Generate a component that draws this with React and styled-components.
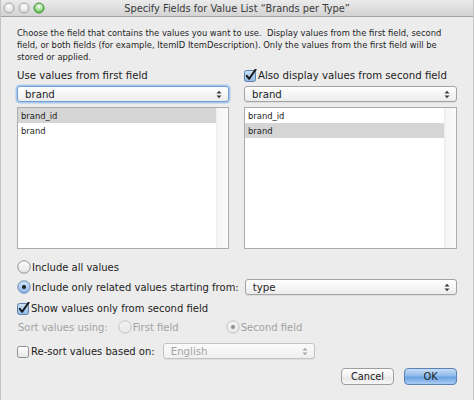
import React from "react";
import styled, { createGlobalStyle } from "styled-components";

const GlobalStyle = createGlobalStyle`
  html, body {
    margin: 0;
    padding: 0;
    background: #ececec;
  }
  body {
    font-family: "DejaVu Sans", "Liberation Sans", sans-serif;
    color: #1c1c1c;
  }
`;

function TrafficLight({ color, ring }) {
  return (
    <svg width="12" height="12" viewBox="0 0 12 12">
      <defs>
        <radialGradient id={"tl" + color} cx="50%" cy="35%" r="60%">
          <stop offset="0%" stopColor="#ffffff" />
          <stop offset="100%" stopColor={color} />
        </radialGradient>
      </defs>
      <circle cx="6" cy="6" r="5" fill={`url(#tl${color})`} stroke={ring} strokeWidth="1" />
    </svg>
  );
}

function Arrows({ dim }) {
  const c = dim ? "#a8a8a8" : "#3a3a3a";
  return (
    <svg width="6" height="9" viewBox="0 0 6 9">
      <path d="M0.5 3.5 L3 0.8 L5.5 3.5 Z" fill={c} />
      <path d="M0.5 5.5 L3 8.2 L5.5 5.5 Z" fill={c} />
    </svg>
  );
}

function CheckBox({ checked }) {
  const id = "cb" + (checked ? 1 : 0);
  return (
    <svg width="13" height="13" viewBox="0 0 13 13">
      <defs>
        <linearGradient id={id} x1="0" y1="0" x2="0" y2="1">
          <stop offset="0%" stopColor={checked ? "#cfe3f8" : "#ffffff"} />
          <stop offset="100%" stopColor={checked ? "#8fb9e6" : "#e6e6e6"} />
        </linearGradient>
      </defs>
      <rect x="0.5" y="1.5" width="11" height="11" rx="2" fill={`url(#${id})`} stroke={checked ? "#5f7fa8" : "#8e8e8e"} />
      {checked && (
        <path d="M2.8 6.8 L5.2 9.8 L11.6 0.6" fill="none" stroke="#1a1a1a" strokeWidth="2" strokeLinecap="round" strokeLinejoin="round" />
      )}
    </svg>
  );
}

function Radio({ on, dim }) {
  const id = "rd" + (on ? 1 : 0) + (dim ? 1 : 0);
  return (
    <svg width="14" height="14" viewBox="0 0 14 14" style={{ opacity: dim ? 0.45 : 1 }}>
      <defs>
        <linearGradient id={id} x1="0" y1="0" x2="0" y2="1">
          <stop offset="0%" stopColor={on && !dim ? "#d3e6fa" : "#ffffff"} />
          <stop offset="100%" stopColor={on && !dim ? "#8ab6e6" : "#e2e2e2"} />
        </linearGradient>
      </defs>
      <circle cx="7" cy="7" r="6.2" fill={`url(#${id})`} stroke={on && !dim ? "#5b7ea8" : "#8a8a8a"} strokeWidth="0.9" />
      {on && <circle cx="7" cy="7" r="2" fill="#1c1c1c" />}
    </svg>
  );
}

export default function App() {
  return (
    <>
      <GlobalStyle />
      <Window>
        <TitleBar>
          <Lights>
            <TrafficLight color="#d9d9d9" ring="#a5a5a5" />
            <TrafficLight color="#d9d9d9" ring="#a5a5a5" />
            <TrafficLight color="#5ec24a" ring="#3f8f33" />
          </Lights>
          <Title>Specify Fields for Value List “Brands per Type”</Title>
          <span />
        </TitleBar>

        <Content>
          <Description>
            Choose the field that contains the values you want to use.&nbsp; Display values from the first field, second
            field, or both fields (for example, ItemID ItemDescription). Only the values from the first field will be
            stored or applied.
          </Description>

          <Columns>
            <Column>
              <ColumnHeader>Use values from first field</ColumnHeader>
              <PopUp focused>
                <span>brand</span>
                <Arrows />
              </PopUp>
              <ListBox>
                <Rows>
                  <Row selected>brand_id</Row>
                  <Row>brand</Row>
                </Rows>
                <ScrollStrip />
              </ListBox>
            </Column>
            <Column>
              <ColumnHeader>
                <CheckBox checked />
                <span>Also display values from second field</span>
              </ColumnHeader>
              <PopUp>
                <span>brand</span>
                <Arrows />
              </PopUp>
              <ListBox>
                <Rows>
                  <Row>brand_id</Row>
                  <Row selected>brand</Row>
                </Rows>
                <ScrollStrip />
              </ListBox>
            </Column>
          </Columns>

          <Options>
            <OptionRow $top={10}>
              <Radio />
              <Label>Include all values</Label>
            </OptionRow>
            <OptionRow $top={4}>
              <Radio on />
              <Label>Include only related values starting from:</Label>
              <PopUp $grow>
                <span>type</span>
                <Arrows />
              </PopUp>
            </OptionRow>
            <OptionRow $top={5}>
              <CheckBox checked />
              <Label>Show values only from second field</Label>
            </OptionRow>
            <OptionRow $top={3}>
              <Label $dim>Sort values using:</Label>
              <Choice $width={98}>
                <Radio dim />
                <Label $dim>First field</Label>
              </Choice>
              <Choice>
                <Radio on dim />
                <Label $dim>Second field</Label>
              </Choice>
            </OptionRow>
            <OptionRow $top={8}>
              <CheckBox />
              <Label>Re-sort values based on:</Label>
              <PopUp $dim $width={152}>
                <span>English</span>
                <Arrows dim />
              </PopUp>
            </OptionRow>
          </Options>

          <Buttons>
            <Button>Cancel</Button>
            <Button $primary>OK</Button>
          </Buttons>
        </Content>
      </Window>
    </>
  );
}

const Window = styled.div`
  width: 474px;
  height: 400px;
  box-sizing: border-box;
  background: #ececec;
  display: flex;
  flex-direction: column;
  border-left: 1px solid #c4c4c4;
  border-right: 1px solid #c4c4c4;
`;

const TitleBar = styled.div`
  height: 17px;
  flex: none;
  display: grid;
  grid-template-columns: 1fr auto 1fr;
  align-items: center;
  background: linear-gradient(#ebebeb, #d3d3d3);
  border-bottom: 1px solid #a2a2a2;
  box-sizing: border-box;
`;

const Lights = styled.div`
  display: flex;
  gap: 3px;
  padding-left: 2px;
  svg {
    display: block;
  }
`;

const Title = styled.div`
  font-size: 9.8px;
  color: #3a3a3a;
  white-space: nowrap;
`;

const Content = styled.div`
  padding: 10px 16px 0 16px;
  display: flex;
  flex-direction: column;
`;

const Description = styled.p`
  margin: 0;
  font-size: 8.4px;
  line-height: 12px;
  color: #1e1e1e;
`;

const Columns = styled.div`
  margin-top: 5px;
  display: grid;
  grid-template-columns: 212px 213px;
  column-gap: 15px;
`;

const Column = styled.div`
  display: flex;
  flex-direction: column;
`;

const ColumnHeader = styled.div`
  height: 14px;
  display: flex;
  align-items: center;
  gap: 1px;
  font-size: 10.2px;
  color: #1c1c1c;
  white-space: nowrap;
  svg {
    flex: none;
  }
`;

const PopUp = styled.div`
  box-sizing: border-box;
  height: 16px;
  ${(p) => (p.$grow ? "flex: 1; margin-left: 6px;" : "")}
  ${(p) => (p.$width ? `width: ${p.$width}px; margin-left: 8px;` : "")}
  margin-top: ${(p) => (p.$grow || p.$width ? "0" : "4px")};
  display: flex;
  align-items: center;
  justify-content: space-between;
  padding: 0 6px 0 7px;
  border: 1px solid ${(p) => (p.focused ? "#6f9fd6" : p.$dim ? "#c3c3c3" : "#a3a3a3")};
  border-radius: 3px;
  background: ${(p) => (p.$dim ? "linear-gradient(#fbfbfb, #efefef)" : "linear-gradient(#ffffff, #ececec)")};
  box-shadow: ${(p) => (p.focused ? "0 0 0 1.5px #a9c8ec" : "0 1px 0 rgba(0,0,0,0.06)")};
  font-size: 10.2px;
  color: ${(p) => (p.$dim ? "#a4a4a4" : "#1c1c1c")};
`;

const ListBox = styled.div`
  margin-top: 5px;
  height: 142px;
  box-sizing: border-box;
  border: 1px solid #acacac;
  background: #ffffff;
  display: flex;
`;

const Rows = styled.div`
  flex: 1;
  display: flex;
  flex-direction: column;
`;

const Row = styled.div`
  height: 15px;
  display: flex;
  align-items: center;
  padding-left: 3px;
  font-size: 8.4px;
  background: ${(p) => (p.selected ? "#d5d5d5" : "transparent")};
  color: #1c1c1c;
`;

const ScrollStrip = styled.div`
  width: 11px;
  flex: none;
  border-left: 1px solid #ececec;
  background: linear-gradient(90deg, #f4f4f4, #fafafa);
`;

const Options = styled.div`
  display: flex;
  flex-direction: column;
`;

const OptionRow = styled.div`
  margin-top: ${(p) => p.$top}px;
  min-height: 16px;
  display: flex;
  align-items: center;
  svg {
    flex: none;
  }
`;

const Label = styled.span`
  font-size: 10px;
  margin-left: 1px;
  white-space: nowrap;
  color: ${(p) => (p.$dim ? "#a2a2a2" : "#1c1c1c")};
`;

const Choice = styled.div`
  display: flex;
  align-items: center;
  margin-left: 10px;
  ${(p) => (p.$width ? `width: ${p.$width}px;` : "")}
`;

const Buttons = styled.div`
  margin-top: 9px;
  display: flex;
  justify-content: flex-end;
  gap: 10px;
`;

const Button = styled.div`
  width: 53px;
  height: 17px;
  box-sizing: border-box;
  display: flex;
  align-items: center;
  justify-content: center;
  font-size: 9.8px;
  border-radius: 4px;
  border: 1px solid ${(p) => (p.$primary ? "#5a80b4" : "#9d9d9d")};
  background: ${(p) =>
    p.$primary
      ? "linear-gradient(#c6ddf6 0%, #8fbaea 45%, #6aa2e2 55%, #a9cdf5 100%)"
      : "linear-gradient(#ffffff, #f0f0f0 50%, #e6e6e6 51%, #f6f6f6)"};
  color: #1c1c1c;
`;
